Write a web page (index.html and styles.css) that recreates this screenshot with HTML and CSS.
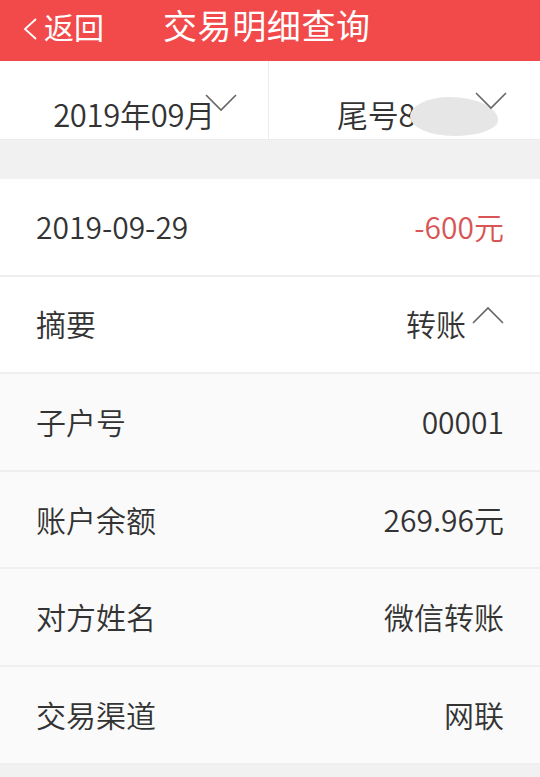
FILE: index.html
```html
<!DOCTYPE html>
<html lang="zh-CN">
<head>
<meta charset="utf-8">
<title>交易明细查询</title>
<link rel="stylesheet" href="styles.css">
</head>
<body>
<header class="topbar">
  <div class="back">
    <svg class="back-icon" width="16" height="24" viewBox="0 0 16 24"><path d="M14 2 L3 12 L14 22" fill="none" stroke="#fff" stroke-width="1.8"/></svg>
    <span>返回</span>
  </div>
  <div class="title">交易明细查询</div>
</header>
<section class="filters">
  <div class="filter">
    <span class="filter-text">2019年09月</span>
    <svg class="chev-down" width="32" height="18" viewBox="0 0 32 18"><path d="M1 1 L16 16 L31 1" fill="none" stroke="#666" stroke-width="1.6"/></svg>
  </div>
  <div class="filter filter-right">
    <span class="filter-text">尾号8</span>
    <span class="blur"></span>
    <svg class="chev-down" width="32" height="18" viewBox="0 0 32 18"><path d="M1 1 L16 16 L31 1" fill="none" stroke="#666" stroke-width="1.6"/></svg>
  </div>
</section>
<div class="spacer"></div>
<section class="list">
  <div class="row white"><span>2019-09-29</span><span class="amount">-600元</span></div>
  <div class="row white"><span>摘要</span><span class="val">转账<svg class="chev-up" width="32" height="18" viewBox="0 0 32 18"><path d="M1 17 L16 2 L31 17" fill="none" stroke="#666" stroke-width="1.6"/></svg></span></div>
  <div class="row"><span>子户号</span><span>00001</span></div>
  <div class="row"><span>账户余额</span><span>269.96元</span></div>
  <div class="row"><span>对方姓名</span><span>微信转账</span></div>
  <div class="row"><span>交易渠道</span><span>网联</span></div>
</section>
</body>
</html>
```
FILE: styles.css
```css
html, body {
  margin: 0;
  padding: 0;
}
body {
  background: #f1f1f1;
  font-family: "Noto Sans CJK SC", "Noto Sans", sans-serif;
  font-weight: 350;
  color: #333;
  width: 540px;
  height: 777px;
  overflow: hidden;
}
.topbar {
  height: 61px;
  background: #f24a4a;
  color: #fff;
  display: flex;
  align-items: center;
  font-weight: 400;
}
.back {
  display: flex;
  align-items: center;
  margin-left: 22px;
  font-size: 30px;
  line-height: 1;
  margin-top: -10px;
}
.back-icon {
  margin-right: 6px;
  margin-top: 6px;
}
.title {
  margin-left: 59px;
  font-size: 34px;
  line-height: 1;
  margin-top: -12px;
  letter-spacing: 0.6px;
}
.filters {
  height: 78px;
  background: #fff;
  display: flex;
  border-bottom: 1px solid #ececec;
}
.filter {
  position: relative;
  flex: 0 0 269px;
  display: flex;
  justify-content: center;
  align-items: flex-end;
  padding-bottom: 3px;
  box-sizing: border-box;
  border-right: 1px solid #ececec;
}
.filter-right {
  flex: 1;
  border-right: none;
  justify-content: flex-start;
  padding-left: 68px;
}
.filter-text {
  font-size: 31px;
  line-height: 44px;
  letter-spacing: -0.3px;
}
.chev-down {
  position: absolute;
  top: 33px;
  right: 31px;
}
.filter-right .chev-down {
  right: 33px;
  top: 31px;
}
.blur {
  position: absolute;
  left: 141px;
  top: 36px;
  width: 88px;
  height: 39px;
  background: #e6e6e6;
  border-radius: 45% 55% 50% 50% / 50% 60% 40% 50%;
}
.spacer {
  height: 39px;
}
.list {
  display: flex;
  flex-direction: column;
}
.row {
  height: 95.6px;
  border-bottom: 2px solid #efefef;
  background: #fafafa;
  display: flex;
  justify-content: space-between;
  align-items: center;
  padding: 0 36px;
  font-size: 30px;
  line-height: 1;
}
.row span {
  margin-top: -2px;
}
.row.white {
  background: #fff;
}
.amount {
  color: #d95454;
}
.val {
  display: flex;
  align-items: center;
}
.chev-up {
  margin-left: 6px;
  margin-top: -16px;
}
```
